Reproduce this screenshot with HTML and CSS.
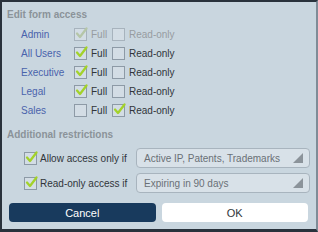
FILE: index.html
```html
<!DOCTYPE html>
<html lang="en">
<head>
    <meta charset="UTF-8">
    <title>Edit form access</title>
    <link rel="stylesheet" href="styles.css">
</head>
<body>
    <div class="dialog">
        <h2 class="section">Edit form access</h2>

        <div class="access-list">
            <div class="access-row disabled">
                <span class="role">Admin</span>
                <label class="opt opt-full"><span class="check on"><svg viewBox="0 0 14 14"><path d="M3 6.5 L6 10 L12.5 1.5"/></svg></span>Full</label>
                <label class="opt"><span class="check"></span>Read-only</label>
            </div>
            <div class="access-row">
                <span class="role">All Users</span>
                <label class="opt opt-full"><span class="check on"><svg viewBox="0 0 14 14"><path d="M3 6.5 L6 10 L12.5 1.5"/></svg></span>Full</label>
                <label class="opt"><span class="check"></span>Read-only</label>
            </div>
            <div class="access-row">
                <span class="role">Executive</span>
                <label class="opt opt-full"><span class="check on"><svg viewBox="0 0 14 14"><path d="M3 6.5 L6 10 L12.5 1.5"/></svg></span>Full</label>
                <label class="opt"><span class="check"></span>Read-only</label>
            </div>
            <div class="access-row">
                <span class="role">Legal</span>
                <label class="opt opt-full"><span class="check on"><svg viewBox="0 0 14 14"><path d="M3 6.5 L6 10 L12.5 1.5"/></svg></span>Full</label>
                <label class="opt"><span class="check"></span>Read-only</label>
            </div>
            <div class="access-row">
                <span class="role">Sales</span>
                <label class="opt opt-full"><span class="check"></span>Full</label>
                <label class="opt"><span class="check on"><svg viewBox="0 0 14 14"><path d="M3 6.5 L6 10 L12.5 1.5"/></svg></span>Read-only</label>
            </div>
        </div>

        <h2 class="section section-gap">Additional restrictions</h2>

        <div class="restrictions">
            <div class="restrict-row">
                <label class="restrict-label"><span class="check on"><svg viewBox="0 0 14 14"><path d="M3 6.5 L6 10 L12.5 1.5"/></svg></span>Allow access only if</label>
                <div class="select">
                    <span>Active IP, Patents, Trademarks</span>
                    <svg class="arrow" viewBox="0 0 10 10"><polygon points="0,10 10,10 10,0"/></svg>
                </div>
            </div>
            <div class="restrict-row">
                <label class="restrict-label"><span class="check on"><svg viewBox="0 0 14 14"><path d="M3 6.5 L6 10 L12.5 1.5"/></svg></span>Read-only access if</label>
                <div class="select">
                    <span>Expiring in 90 days</span>
                    <svg class="arrow" viewBox="0 0 10 10"><polygon points="0,10 10,10 10,0"/></svg>
                </div>
            </div>
        </div>

        <div class="buttons">
            <button class="btn btn-cancel">Cancel</button>
            <button class="btn btn-ok">OK</button>
        </div>
    </div>
</body>
</html>
```

FILE: styles.css
```css
* {
    box-sizing: border-box;
    margin: 0;
    padding: 0;
}

body {
    font-family: "Liberation Sans", Arial, sans-serif;
    font-size: 10px;
    color: #30353a;
}

.dialog {
    width: 318px;
    height: 232px;
    background-color: #c9d6df;
    border-style: solid;
    border-width: 2px 2px 3px 2px;
    border-color: #29323c #7f8c97 #29323c #29323c;
    padding: 7px 6px 0 5px;
}

.section {
    font-size: 10px;
    font-weight: bold;
    line-height: 12px;
    color: #8b9399;
}

.section-gap {
    margin-top: 9px;
}

.access-list {
    margin-top: 4px;
}

.access-row {
    display: flex;
    align-items: center;
    height: 19px;
    padding-left: 14px;
}

.role {
    width: 53px;
    color: #4a63ac;
}

.opt {
    display: flex;
    align-items: center;
    gap: 4px;
}

.opt-full {
    width: 38px;
}

.disabled .opt {
    color: #979ca1;
}

.disabled .check {
    border-color: #a7b3bd;
}

.disabled .check svg path {
    stroke: #b5c6a8;
}

.check {
    position: relative;
    width: 13px;
    height: 13px;
    flex: none;
    border: 1px solid #8d9aa6;
    background-color: #d3dde5;
}

.check svg {
    position: absolute;
    left: -1px;
    top: -2px;
    width: 14px;
    height: 14px;
    overflow: visible;
}

.check svg path {
    fill: none;
    stroke: #a3d22a;
    stroke-width: 2.3;
    stroke-linecap: round;
    stroke-linejoin: round;
}

.restrictions {
    display: flex;
    flex-direction: column;
    gap: 5px;
    margin-top: 7px;
}

.restrict-row {
    display: flex;
    align-items: center;
    height: 20px;
}

.restrict-label {
    display: flex;
    align-items: center;
    gap: 3px;
    width: 129px;
    padding-left: 17px;
}

.select {
    flex: 1;
    height: 20px;
    display: flex;
    align-items: center;
    justify-content: space-between;
    padding: 0 6px 0 7px;
    background-color: #d8e1e8;
    border: 1px solid #a8b4be;
    border-radius: 4px;
    color: #6a7076;
}

.arrow {
    width: 10px;
    height: 10px;
    fill: #8b939a;
}

.buttons {
    display: flex;
    gap: 6px;
    margin: 10px 2px 0 2px;
}

.btn {
    flex: 1;
    height: 19px;
    border: none;
    border-radius: 4px;
    font-family: "Liberation Sans", Arial, sans-serif;
    font-size: 11px;
    font-weight: normal;
}

.btn-cancel {
    background-color: #183a5d;
    color: #ffffff;
}

.btn-ok {
    background-color: #ffffff;
    color: #30353a;
}
```
